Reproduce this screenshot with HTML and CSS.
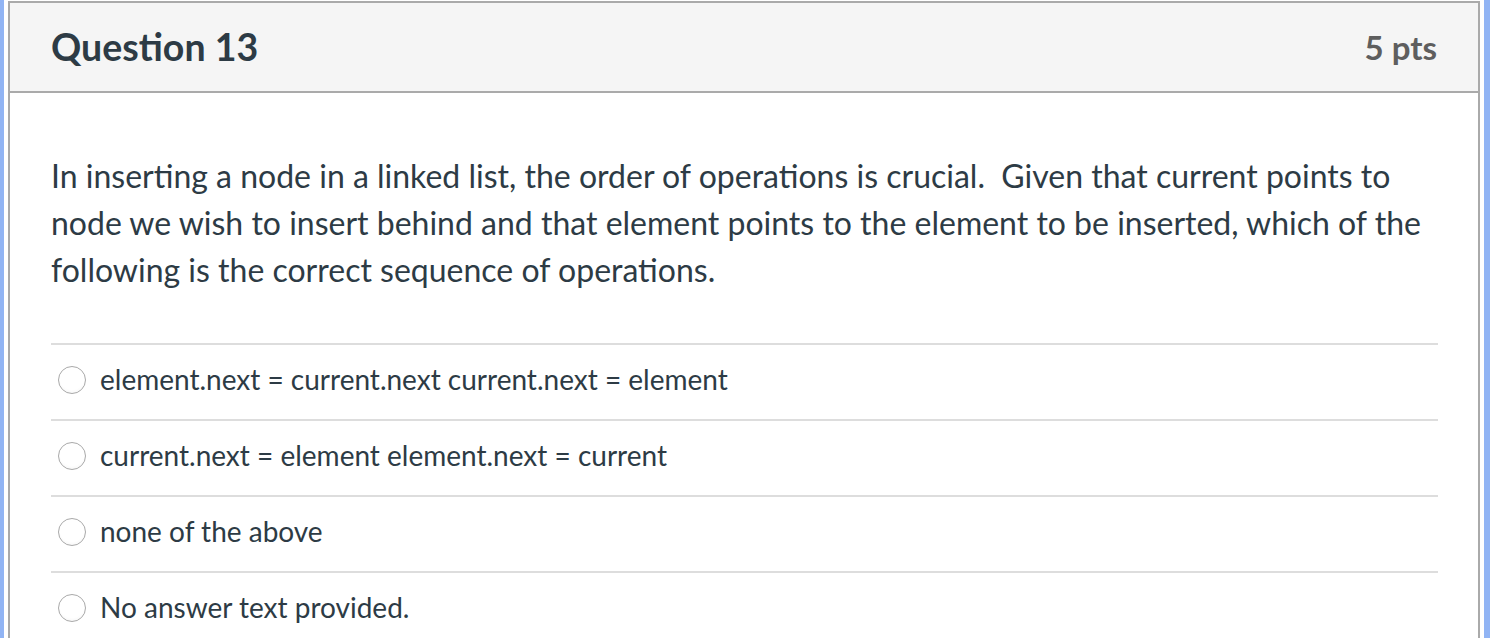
FILE: index.html
```html
<!DOCTYPE html>
<html>
<head>
<meta charset="utf-8">
<link rel="stylesheet" href="styles.css">
</head>
<body>
<div class="page">
  <div class="stripe stripe-left"></div>
  <div class="question">
    <div class="q-header">
      <h2 class="q-title">Question 13</h2>
      <div class="q-points">5 pts</div>
    </div>
    <div class="q-body">
      <p class="q-text">In inserting a node in a linked list, the order of operations is crucial.&nbsp; Given that current points to node we wish to insert behind and that element points to the element to be inserted, which of the following is the correct sequence of operations.</p>
      <div class="answers">
        <div class="answer"><span class="radio"></span><span class="a-text">element.next = current.next current.next = element</span></div>
        <div class="answer"><span class="radio"></span><span class="a-text">current.next = element element.next = current</span></div>
        <div class="answer"><span class="radio"></span><span class="a-text">none of the above</span></div>
        <div class="answer"><span class="radio"></span><span class="a-text">No answer text provided.</span></div>
      </div>
    </div>
  </div>
  <div class="stripe stripe-right"></div>
</div>
</body>
</html>
```
FILE: styles.css
```css
html, body {
  margin: 0;
  padding: 0;
  background: #ffffff;
  height: 100%;
  overflow: hidden;
}
body {
  font-family: Lato, "Open Sans", sans-serif;
  color: #2d3b45;
}
.page {
  display: flex;
  align-items: stretch;
  height: 638px;
}
.stripe {
  background: #91b4f4;
  flex: none;
}
.stripe-left {
  width: 4px;
}
.stripe-right {
  width: 6px;
  margin-left: 4px;
}
.question {
  flex: none;
  width: 1468px;
  margin-left: 4px;
  margin-top: 1px;
  border: 2px solid #aaaaaa;
  border-bottom: none;
}
.q-header {
  display: flex;
  justify-content: space-between;
  align-items: center;
  height: 88px;
  padding: 0 41px 0 41px;
  background: #f5f5f5;
  border-bottom: 2px solid #aaaaaa;
}
.q-title {
  margin: 0 0 2px 0;
  font-size: 37.5px;
  font-weight: 700;
  color: #2d3b45;
}
.q-points {
  font-size: 33px;
  font-weight: 700;
  color: #5e5e5e;
}
.q-body {
  padding: 59px 40px 0 41px;
}
.q-text {
  margin: 0 0 50px 0;
  font-size: 32px;
  line-height: 47px;
}
.answers {
  display: flex;
  flex-direction: column;
}
.answer {
  display: flex;
  align-items: center;
  gap: 14px;
  height: 68px;
  padding-bottom: 6px;
  border-top: 2px solid #dddddd;
  padding-left: 7px;
}
.radio {
  width: 26px;
  height: 26px;
  margin-top: 2px;
  border-radius: 50%;
  border: 1px solid #a9a9a9;
  background: radial-gradient(circle at 50% 40%, #ffffff 60%, #eeeeee 100%);
  flex: none;
}
.a-text {
  font-size: 28px;
}
```
